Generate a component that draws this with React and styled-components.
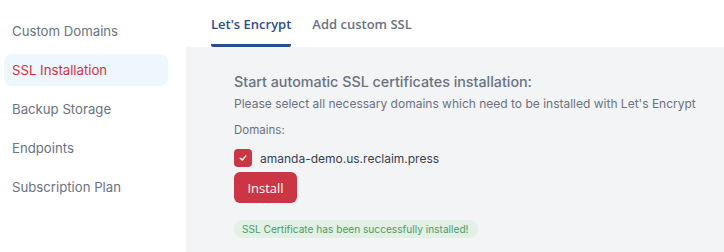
import React from 'react';
import styled, { createGlobalStyle } from 'styled-components';

const Global = createGlobalStyle`
  html, body { margin: 0; padding: 0; background: #fff; }
  body { font-family: Inter, "Noto Sans", sans-serif; }
`;

const Page = styled.div`
  display: flex;
  width: 724px;
  height: 252px;
  overflow: hidden;
`;

const Sidebar = styled.nav`
  width: 186px;
  flex-shrink: 0;
  background: #fff;
  padding: 15px 18px 0 4px;
  box-sizing: border-box;
  display: flex;
  flex-direction: column;
  gap: 7px;
`;

const NavItem = styled.div`
  height: 32px;
  display: flex;
  align-items: center;
  padding-left: 8px;
  border-radius: 8px;
  font-size: 13.2px;
  color: ${({ active }) => (active ? '#d1343f' : '#6b7280')};
  background: ${({ active }) => (active ? '#eef6fe' : 'transparent')};
`;

const Main = styled.div`
  flex: 1;
  display: flex;
  flex-direction: column;
`;

const Tabs = styled.div`
  height: 47px;
  display: flex;
  gap: 21px;
  padding-left: 25px;
  background: #fff;
  font-family: "Open Sans", sans-serif;
`;

const Tab = styled.div`
  display: flex;
  align-items: center;
  font-size: 13px;
  font-weight: 600;
  color: ${({ active }) => (active ? '#2a4d8f' : '#6b7280')};
  border-bottom: 3px solid ${({ active }) => (active ? '#2a4d8f' : 'transparent')};
  border-radius: 0 0 2px 2px;
  padding-top: 3px;
  box-sizing: border-box;
`;

const Content = styled.div`
  flex: 1;
  background: #f3f4f6;
  padding: 25px 0 0 48px;
  display: flex;
  flex-direction: column;
  align-items: flex-start;
  white-space: nowrap;
`;

const Heading = styled.div`
  font-size: 14.3px;
  font-weight: 500;
  color: #6b7280;
  line-height: 20px;
`;

const Sub = styled.div`
  font-size: 12px;
  color: #6b7280;
  line-height: 16px;
  margin-top: 4px;
`;

const Label = styled.div`
  font-size: 11.5px;
  color: #6b7280;
  margin-top: 10px;
  line-height: 16px;
`;

const CheckRow = styled.label`
  display: flex;
  align-items: center;
  gap: 8px;
  margin-top: 11px;
  font-size: 12px;
  color: #374151;
`;

const Box = styled.span`
  width: 18px;
  height: 18px;
  border-radius: 4px;
  background: #cc3544;
  display: flex;
  align-items: center;
  justify-content: center;
`;

const Button = styled.button`
  margin-top: 5px;
  height: 31px;
  width: 63px;
  border: none;
  border-radius: 6px;
  background: #cc3544;
  color: #fff;
  font-family: "Open Sans", sans-serif;
  font-size: 13px;
  padding: 0;
`;

const Badge = styled.div`
  margin-top: 17px;
  height: 18px;
  padding: 0 9px 0 8px;
  border-radius: 9px;
  background: #e2f0e6;
  color: #4e9c66;
  font-size: 10.15px;
  display: flex;
  align-items: center;
`;

const navItems = ['Custom Domains', 'SSL Installation', 'Backup Storage', 'Endpoints', 'Subscription Plan'];

export default function App() {
  return (
    <Page>
      <Global />
      <Sidebar>
        {navItems.map((n) => (
          <NavItem key={n} active={n === 'SSL Installation'}>{n}</NavItem>
        ))}
      </Sidebar>
      <Main>
        <Tabs>
          <Tab active>Let's Encrypt</Tab>
          <Tab>Add custom SSL</Tab>
        </Tabs>
        <Content>
          <Heading>Start automatic SSL certificates installation:</Heading>
          <Sub>Please select all necessary domains which need to be installed with Let's Encrypt</Sub>
          <Label>Domains:</Label>
          <CheckRow>
            <Box>
              <svg width="10" height="10" viewBox="0 0 10 10">
                <path d="M2.2 5.2 L4.2 7 L7.8 3" fill="none" stroke="#fff" strokeWidth="1.4" strokeLinecap="round" strokeLinejoin="round" />
              </svg>
            </Box>
            amanda-demo.us.reclaim.press
          </CheckRow>
          <Button>Install</Button>
          <Badge>SSL Certificate has been successfully installed!</Badge>
        </Content>
      </Main>
    </Page>
  );
}
